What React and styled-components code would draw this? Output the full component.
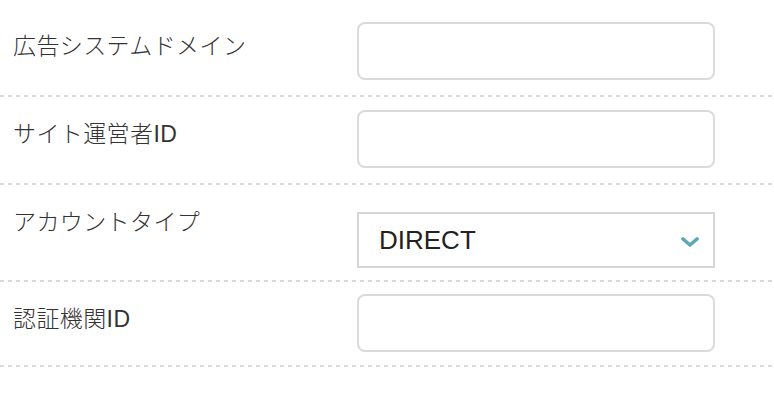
import React from "react";
import styled, { createGlobalStyle } from "styled-components";

const Global = createGlobalStyle`
  html, body { margin: 0; padding: 0; background: #fff; }
  body { font-family: "Liberation Sans", "Noto Sans CJK JP", sans-serif; color: #333; }
  * { box-sizing: border-box; }
`;

const Form = styled.div`
  width: 774px;
  padding-top: 9px;
`;

const Row = styled.div`
  display: flex;
  align-items: flex-start;
  padding-bottom: 2px;
  background-image: repeating-linear-gradient(
    to right,
    #d9d9d9 0,
    #d9d9d9 4px,
    transparent 4px,
    transparent 8px
  );
  background-size: 100% 2px;
  background-repeat: no-repeat;
  background-position: left bottom;
`;

const Label = styled.div`
  width: 357px;
  padding-left: 13px;
  margin-top: 20px;
  font-size: 23px;
  font-weight: 300;
  letter-spacing: 0.4px;
  line-height: 34px;
  color: #333;
  white-space: nowrap;
`;

const Control = styled.div`
  width: 358px;
  margin: ${(p) => p.$top}px 0 ${(p) => p.$bottom}px;
`;

const TextInput = styled.input`
  display: block;
  width: 100%;
  height: 58px;
  border: 2px solid #dadada;
  border-radius: 8px;
  background: #fff;
  outline: none;
  padding: 0 18px;
  font-size: 24px;
  font-family: inherit;
`;

const Select = styled.div`
  display: flex;
  align-items: center;
  justify-content: space-between;
  height: 56px;
  border: 2px solid #d6d6d6;
  background: #fff;
  padding: 0 14px 0 20px;
  font-family: "Liberation Sans", Arial, sans-serif;
  font-size: 26px;
  color: #222;
`;

const Chevron = () => (
  <svg width="18" height="11" viewBox="0 0 18 11" style={{ marginTop: 4 }}>
    <polyline
      points="2,2 9,8 16,2"
      fill="none"
      stroke="#5ba6b8"
      strokeWidth="3.6"
      strokeLinecap="round"
      strokeLinejoin="round"
    />
  </svg>
);

export default function App() {
  return (
    <>
      <Global />
      <Form>
        <Row>
          <Label>広告システムドメイン</Label>
          <Control $top={13} $bottom={15}>
            <TextInput />
          </Control>
        </Row>
        <Row>
          <Label>サイト運営者ID</Label>
          <Control $top={13} $bottom={15}>
            <TextInput />
          </Control>
        </Row>
        <Row>
          <Label>アカウントタイプ</Label>
          <Control $top={27} $bottom={12}>
            <Select>
              <span>DIRECT</span>
              <Chevron />
            </Select>
          </Control>
        </Row>
        <Row>
          <Label>認証機関ID</Label>
          <Control $top={12} $bottom={13}>
            <TextInput />
          </Control>
        </Row>
      </Form>
    </>
  );
}
